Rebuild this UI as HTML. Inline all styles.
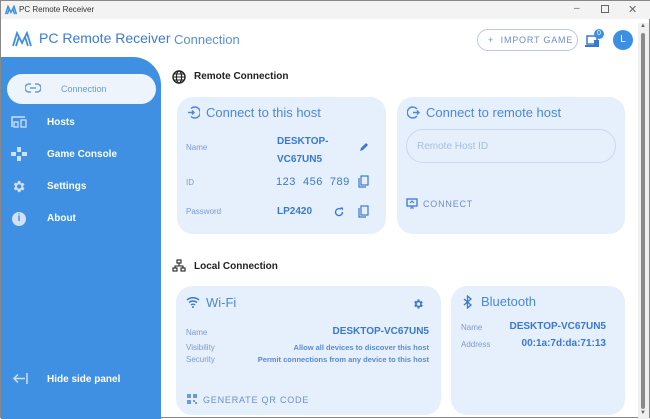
<!DOCTYPE html>
<html><head><style>
*{margin:0;padding:0;box-sizing:border-box}
body{width:650px;height:418px;overflow:hidden;background:#fff;font-family:"Liberation Sans",sans-serif;position:relative;border:1px solid #888}
.a{position:absolute}
.card{position:absolute;background:#e6f0fc;border-radius:16px}
.lbl{position:absolute;font-size:8px;color:#7a9bd0}
.val{position:absolute;font-size:10px;font-weight:bold;color:#3a78d0}
.nav{position:absolute;left:46px;color:#fff;font-size:10px;font-weight:bold}
svg{position:absolute}
</style></head><body>
<div class="a" style="left:0;top:0;width:650px;height:18px;background:#f3f3f3"></div>
<svg style="left:4px;top:4px" width="12" height="10" viewBox="0 0 20 16"><path d="M1 15L5 2L10 12L15 2L19 15M4 15L7 6M16 15L13 6" stroke="#3d8fe3" stroke-width="2.5" fill="none"/></svg>
<div class="a" style="left:18px;top:4px;font-size:8px;color:#333">PC Remote Receiver</div>
<div class="a" style="left:573px;top:2px;font-size:10px;color:#666">–</div>
<div class="a" style="left:600px;top:4px;width:8px;height:8px;border:1px solid #666"></div>
<div class="a" style="left:627px;top:2px;font-size:11px;color:#666">✕</div>

<svg style="left:11px;top:30px" width="20" height="16" viewBox="0 0 20 16"><path d="M1 15L5 2L10 12L15 2L19 15M4 15L7 6M16 15L13 6" stroke="#3d8fe3" stroke-width="1.8" fill="none"/></svg>
<div class="a" style="left:38px;top:29px;font-size:14px;color:#3a7bd5">PC Remote Receiver</div>
<div class="a" style="left:173px;top:31px;font-size:13px;color:#5b8fd6">Connection</div>
<div class="a" style="left:476px;top:28px;width:101px;height:22px;border:1px solid #b8c9ea;border-radius:12px;font-size:9px;color:#6a8fd0;letter-spacing:0.8px;padding:5px 0 0 10px">+&nbsp;&nbsp;IMPORT GAME</div>
<svg style="left:584px;top:33px" width="16" height="14" viewBox="0 0 16 14"><rect x="2" y="2" width="10" height="8" fill="none" stroke="#3a78d0" stroke-width="1.5"/><rect x="0" y="11" width="9" height="2" fill="#3a78d0"/><rect x="9" y="6" width="5" height="7" fill="#3a78d0"/></svg>
<div class="a" style="left:593px;top:28px;width:10px;height:10px;border-radius:5px;background:#3d8fe3;color:#fff;font-size:7px;text-align:center;line-height:10px">0</div>
<div class="a" style="left:612px;top:29px;width:20px;height:20px;border-radius:10px;background:#3d8fe3;color:#fff;font-size:10px;text-align:center;line-height:20px">L</div>
<div class="a" style="left:637px;top:22px;width:11px;height:396px;background:#f0f0f0"></div>
<div class="a" style="left:640px;top:32px;width:4px;height:376px;background:#8a8a8a;border-radius:2px"></div>
<div class="a" style="left:639px;top:22px;font-size:6px;color:#666">▲</div>
<div class="a" style="left:639px;top:409px;font-size:6px;color:#666">▼</div>

<div class="a" style="left:0;top:56px;width:160px;height:362px;background:#3f8fe2;border-top-right-radius:28px"></div>
<div class="a" style="left:6px;top:73px;width:149px;height:30px;background:#eef4fc;border-radius:15px"></div>
<svg style="left:24px;top:82px" width="16" height="10" viewBox="0 0 16 10"><path d="M6 1H4a4 4 0 0 0 0 8h2M10 1h2a4 4 0 0 1 0 8h-2M5 5h6" fill="none" stroke="#6a9ad8" stroke-width="1.5"/></svg>
<div class="a" style="left:60px;top:83px;font-size:9px;color:#6a9ad8">Connection</div>
<svg style="left:10px;top:115px" width="16" height="12" viewBox="0 0 16 12"><path d="M1 11V1h13" fill="none" stroke="#cfe0f7" stroke-width="1.5"/><rect x="3" y="6" width="4" height="5" fill="none" stroke="#cfe0f7" stroke-width="1.3"/><rect x="10" y="4" width="5" height="7" fill="none" stroke="#cfe0f7" stroke-width="1.3"/></svg>
<div class="nav" style="top:116px">Hosts</div>
<svg style="left:10px;top:146px" width="16" height="14" viewBox="0 0 16 14"><g fill="#cfe0f7"><rect x="6" y="0" width="4" height="5"/><rect x="6" y="9" width="4" height="5"/><rect x="0" y="5" width="5" height="4"/><rect x="11" y="5" width="5" height="4"/></g></svg>
<div class="nav" style="top:148px">Game Console</div>
<svg style="left:10px;top:178px" width="15" height="15" viewBox="0 0 24 24"><path fill="#cfe0f7" d="M19.4 13a7.5 7.5 0 0 0 0-2l2.1-1.6-2-3.5-2.5 1a7 7 0 0 0-1.7-1L15 3h-4l-.4 2.7a7 7 0 0 0-1.7 1l-2.5-1-2 3.5L6.5 11a7.5 7.5 0 0 0 0 2l-2.1 1.6 2 3.5 2.5-1a7 7 0 0 0 1.7 1L11 21h4l.4-2.7a7 7 0 0 0 1.7-1l2.5 1 2-3.5zM13 15.5a3.5 3.5 0 1 1 0-7 3.5 3.5 0 0 1 0 7z"/></svg>
<div class="nav" style="top:180px">Settings</div>
<div class="a" style="left:11px;top:211px;width:14px;height:14px;border-radius:7px;background:#cfe0f7;color:#3f8fe2;font-size:10px;font-weight:bold;text-align:center;line-height:14px">i</div>
<div class="nav" style="top:212px">About</div>
<svg style="left:11px;top:371px" width="16" height="13" viewBox="0 0 16 13"><path d="M15 1v11M13 6.5H2M6 2.5L2 6.5l4 4" fill="none" stroke="#cfe0f7" stroke-width="1.5"/></svg>
<div class="nav" style="top:373px">Hide side panel</div>

<svg style="left:171px;top:69px" width="14" height="14" viewBox="0 0 14 14"><circle cx="7" cy="7" r="6" fill="#fff" stroke="#222" stroke-width="1.4"/><ellipse cx="7" cy="7" rx="2.6" ry="6" fill="none" stroke="#222" stroke-width="1.2"/><path d="M1 7H13M2 4H12M2 10H12" stroke="#222" stroke-width="1"/></svg>
<div class="a" style="left:193px;top:70px;font-size:10px;font-weight:bold;color:#222">Remote Connection</div>

<div class="card" style="left:176px;top:96px;width:209px;height:137px"></div>
<svg style="left:186px;top:105px" width="13" height="13" viewBox="0 0 13 13"><path d="M4 2.5A5.5 5.5 0 1 1 4 10.5" fill="none" stroke="#4a88d8" stroke-width="1.4"/><path d="M1 6.5h6M5 4.5l2 2-2 2" fill="none" stroke="#4a88d8" stroke-width="1.4"/></svg>
<div class="a" style="left:205px;top:104px;font-size:13px;color:#4a88d8">Connect to this host</div>
<div class="lbl" style="left:185px;top:142px">Name</div>
<div class="val" style="left:276px;top:132px;line-height:18px">DESKTOP-<br>VC67UN5</div>
<svg style="left:358px;top:141px" width="10" height="10" viewBox="0 0 10 10"><path d="M1 9l1-3 5-5 2 2-5 5z" fill="#3a78d0"/></svg>
<div class="lbl" style="left:185px;top:177px">ID</div>
<div class="a" style="left:275px;top:175px;font-size:11px;color:#3a78d0;letter-spacing:0.5px">123&nbsp; 456&nbsp; 789</div>
<svg style="left:357px;top:174px" width="11" height="13" viewBox="0 0 11 13"><path d="M1 3v9h7" fill="none" stroke="#3a78d0" stroke-width="1.2"/><rect x="3" y="1" width="7" height="9" fill="none" stroke="#3a78d0" stroke-width="1.2"/></svg>
<div class="lbl" style="left:185px;top:206px">Password</div>
<div class="val" style="left:276px;top:205px">LP2420</div>
<svg style="left:333px;top:206px" width="10" height="10" viewBox="0 0 10 10"><path d="M8.5 5A3.5 3.5 0 1 1 7 2.2" fill="none" stroke="#3a78d0" stroke-width="1.3"/><path d="M6 0.5h3v3z" fill="#3a78d0"/></svg>
<svg style="left:357px;top:204px" width="11" height="13" viewBox="0 0 11 13"><path d="M1 3v9h7" fill="none" stroke="#3a78d0" stroke-width="1.2"/><rect x="3" y="1" width="7" height="9" fill="none" stroke="#3a78d0" stroke-width="1.2"/></svg>

<div class="card" style="left:396px;top:96px;width:228px;height:137px"></div>
<svg style="left:406px;top:105px" width="13" height="13" viewBox="0 0 13 13"><path d="M10 3A5.5 5.5 0 1 0 10 10" fill="none" stroke="#4a88d8" stroke-width="1.4"/><path d="M6 6.5h6M10 4.5l2 2-2 2" fill="none" stroke="#4a88d8" stroke-width="1.4"/></svg>
<div class="a" style="left:425px;top:104px;font-size:13px;color:#4a88d8">Connect to remote host</div>
<div class="a" style="left:405px;top:128px;width:210px;height:34px;border:1px solid #c8d8ef;border-radius:17px;font-size:10px;color:#a3bde3;padding:11px 0 0 10px">Remote Host ID</div>
<svg style="left:405px;top:197px" width="12" height="11" viewBox="0 0 12 11"><rect x="1" y="1" width="10" height="7" fill="none" stroke="#3a78d0" stroke-width="1.3"/><path d="M4 10h4M6 8v2M4 5l2-2 2 2" fill="none" stroke="#3a78d0" stroke-width="1.1"/></svg>
<div class="a" style="left:422px;top:198px;font-size:9px;color:#6a8fd0;letter-spacing:0.8px">CONNECT</div>

<svg style="left:171px;top:258px" width="14" height="14" viewBox="0 0 14 14"><g fill="none" stroke="#222" stroke-width="1.1"><rect x="5" y="1" width="4" height="3"/><rect x="1" y="9" width="4" height="3"/><rect x="9" y="9" width="4" height="3"/><path d="M7 4V7M3 9V7H11V9"/></g></svg>
<div class="a" style="left:193px;top:260px;font-size:10px;font-weight:bold;color:#222">Local Connection</div>

<div class="card" style="left:175px;top:285px;width:265px;height:129px"></div>
<svg style="left:185px;top:295px" width="14" height="12" viewBox="0 0 14 12"><g fill="none" stroke="#3a78d0" stroke-width="1.5"><path d="M1 4a9 9 0 0 1 12 0M3 6.5a6 6 0 0 1 8 0M5 9a3 3 0 0 1 4 0"/></g><circle cx="7" cy="11" r="1" fill="#3a78d0"/></svg>
<div class="a" style="left:205px;top:294px;font-size:13px;color:#4a88d8">Wi-Fi</div>
<svg style="left:411px;top:297px" width="12" height="12" viewBox="0 0 24 24"><path fill="#3a78d0" d="M19.4 13a7.5 7.5 0 0 0 0-2l2.1-1.6-2-3.5-2.5 1a7 7 0 0 0-1.7-1L15 3h-4l-.4 2.7a7 7 0 0 0-1.7 1l-2.5-1-2 3.5L6.5 11a7.5 7.5 0 0 0 0 2l-2.1 1.6 2 3.5 2.5-1a7 7 0 0 0 1.7 1L11 21h4l.4-2.7a7 7 0 0 0 1.7-1l2.5 1 2-3.5zM13 15.5a3.5 3.5 0 1 1 0-7 3.5 3.5 0 0 1 0 7z"/></svg>
<div class="lbl" style="left:185px;top:327px">Name</div>
<div class="val" style="right:220px;top:325px">DESKTOP-VC67UN5</div>
<div class="lbl" style="left:185px;top:342px">Visibility</div>
<div class="a" style="right:220px;top:342px;font-size:7.5px;font-weight:bold;color:#5a8ad0">Allow all devices to discover this host</div>
<div class="lbl" style="left:185px;top:354px">Security</div>
<div class="a" style="right:220px;top:354px;font-size:7.5px;font-weight:bold;color:#5a8ad0">Permit connections from any device to this host</div>
<svg style="left:186px;top:393px" width="10" height="10" viewBox="0 0 10 10"><g fill="#6a9ad8"><rect x="0" y="0" width="4" height="4"/><rect x="6" y="0" width="4" height="4"/><rect x="0" y="6" width="4" height="4"/><rect x="6" y="6" width="2" height="2"/><rect x="8" y="8" width="2" height="2"/></g></svg>
<div class="a" style="left:202px;top:394px;font-size:9px;color:#6a8fd0;letter-spacing:0.8px">GENERATE QR CODE</div>

<div class="card" style="left:450px;top:285px;width:174px;height:129px"></div>
<svg style="left:462px;top:294px" width="9" height="14" viewBox="0 0 9 14"><path d="M1 4l7 6-3.5 3V1L8 4 1 10" fill="none" stroke="#3a78d0" stroke-width="1.3"/></svg>
<div class="a" style="left:480px;top:293px;font-size:13px;color:#4a88d8">Bluetooth</div>
<div class="lbl" style="left:460px;top:322px">Name</div>
<div class="val" style="right:43px;top:320px">DESKTOP-VC67UN5</div>
<div class="lbl" style="left:460px;top:339px">Address</div>
<div class="val" style="right:43px;top:337px">00:1a:7d:da:71:13</div>
</body></html>
